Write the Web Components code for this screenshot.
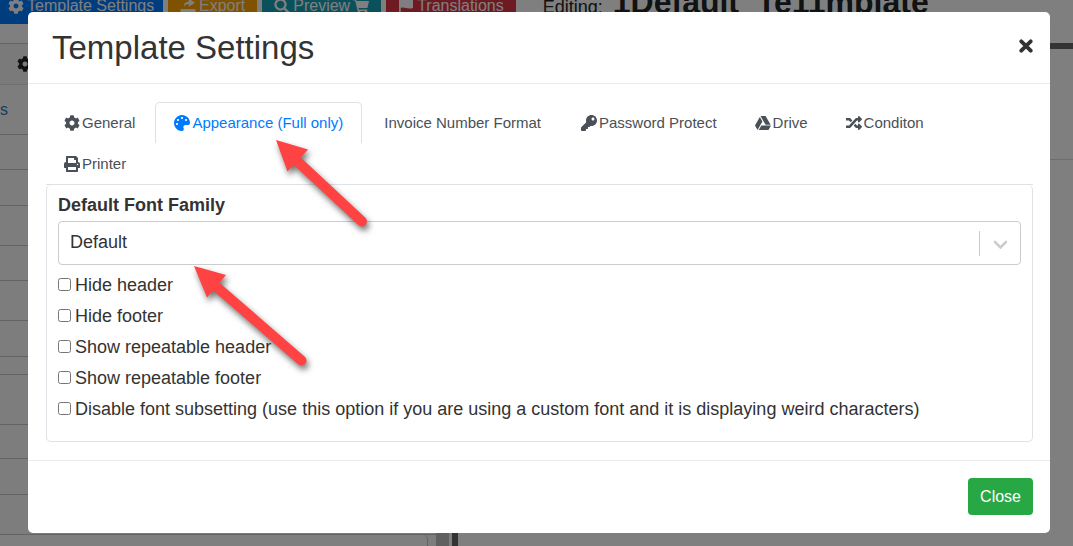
<!DOCTYPE html>
<html lang="en">
<head>
<meta charset="utf-8">
<meta name="viewport" content="width=device-width, initial-scale=1">
<title>Template Settings</title>
<style>
  :root {
    --accent: #007bff;
    --text: #333;
    --muted: #495057;
    --line: #dee2e6;
  }
  html, body { height: 100%; }
  body {
    margin: 0;
    overflow: hidden;
    background: #fff;
    color: var(--text);
    font-family: "Liberation Sans", Arial, sans-serif;
  }
</style>
</head>
<body>

<editor-page inert></editor-page>

<modal-dialog heading="Template Settings">
  <tab-bar>
    <tab-item icon="cog">General</tab-item>
    <tab-item icon="palette" active>Appearance (Full only)</tab-item>
    <tab-item>Invoice Number Format</tab-item>
    <tab-item icon="key">Password Protect</tab-item>
    <tab-item icon="drive">Drive</tab-item>
    <tab-item icon="random">Conditon</tab-item>
    <tab-item icon="print">Printer</tab-item>
  </tab-bar>
  <tab-panel>
    <select-field label="Default Font Family" value="Default"></select-field>
    <check-field label="Hide header"></check-field>
    <check-field label="Hide footer"></check-field>
    <check-field label="Show repeatable header"></check-field>
    <check-field label="Show repeatable footer"></check-field>
    <check-field label="Disable font subsetting (use this option if you are using a custom font and it is displaying weird characters)"></check-field>
  </tab-panel>
</modal-dialog>

<pointer-arrows></pointer-arrows>

<script>
(function () {
  const ICONS = {
    cog: '<path d="M487.4 315.7l-42.6-24.6c4.3-23.2 4.3-47 0-70.2l42.6-24.6c4.9-2.8 7.1-8.6 5.5-14-11.1-35.6-30-67.8-54.7-94.6-3.8-4.1-10-5.1-14.8-2.3L380.8 110c-17.9-15.4-38.5-27.3-60.8-35.1V25.8c0-5.6-3.9-10.5-9.4-11.7-36.7-8.2-74.3-7.8-109.2 0-5.5 1.2-9.4 6.1-9.4 11.7V75c-22.2 7.9-42.8 19.8-60.8 35.1L88.7 85.5c-4.9-2.8-11-1.9-14.8 2.3-24.7 26.7-43.6 58.9-54.7 94.6-1.7 5.4.6 11.2 5.5 14L67.3 221c-4.3 23.2-4.3 47 0 70.2l-42.6 24.6c-4.9 2.8-7.1 8.6-5.5 14 11.1 35.6 30 67.8 54.7 94.6 3.8 4.1 10 5.1 14.8 2.3l42.6-24.6c17.9 15.4 38.5 27.3 60.8 35.1v49.2c0 5.6 3.9 10.5 9.4 11.7 36.7 8.2 74.3 7.8 109.2 0 5.5-1.2 9.4-6.1 9.4-11.7v-49.2c22.2-7.9 42.8-19.8 60.8-35.1l42.6 24.6c4.9 2.8 11 1.9 14.8-2.3 24.7-26.7 43.6-58.9 54.7-94.6 1.5-5.5-.7-11.3-5.6-14.1zM256 336c-44.1 0-80-35.9-80-80s35.9-80 80-80 80 35.9 80 80-35.9 80-80 80z"/>',
    palette: '<path d="M204.3 5C104.9 24.4 24.8 104.3 5.2 203.4c-37 187 131.7 326.4 258.8 306.7 41.2-6.4 61.4-54.6 42.5-91.7-23.1-45.4 9.9-98.4 60.9-98.4h79.7c35.8 0 64.8-29.6 64.9-65.3C511.5 97.1 368.1-26.9 204.3 5zM96 320c-17.7 0-32-14.3-32-32s14.3-32 32-32 32 14.3 32 32-14.3 32-32 32zm32-128c-17.7 0-32-14.3-32-32s14.3-32 32-32 32 14.3 32 32-14.3 32-32 32zm128-64c-17.7 0-32-14.3-32-32s14.3-32 32-32 32 14.3 32 32-14.3 32-32 32zm128 64c-17.7 0-32-14.3-32-32s14.3-32 32-32 32 14.3 32 32-14.3 32-32 32z"/>',
    key: '<path d="M512 176c0 97.2-78.8 176-176 176-11.2 0-22.2-1.1-32.8-3.1l-24 27A24 24 0 0 1 261.2 384H224v40c0 13.3-10.7 24-24 24h-40v40c0 13.3-10.7 24-24 24H24c-13.3 0-24-10.7-24-24v-78.1c0-6.4 2.5-12.5 7-17l161.8-161.8C163.1 213.8 160 195.3 160 176 160 78.8 238.8 0 336 0c97.5 0 176 78.5 176 176zM336 128c0 26.5 21.5 48 48 48s48-21.5 48-48-21.5-48-48-48-48 21.5-48 48z"/>',
    drive: '<path d="M339 314.9L175.4 32h161.2l163.6 282.9H339zm-137.5 23.6L120.9 480h310.5L512 338.5H201.5zM154.1 67.4L0 338.5 80.6 480 237 208.8 154.1 67.4z"/>',
    random: '<path d="M505 359c9.4 9.4 9.4 24.6 0 34l-80 80c-15 15-41 4.500-41-17V416h-58.800a12 12 0 0 1-8.800-3.800l-70.500-75.600 53.300-57.100L352 336h32v-40c0-21.400 25.900-32 41-17l80 80zM12 176h84l52.800 56.600 53.300-57.200-70.500-75.600a12 12 0 0 0-8.800-3.800H12c-6.600 0-12 5.400-12 12v56c0 6.600 5.400 12 12 12zm372 0v40c0 21.500 26 32 41 17l80-80c9.400-9.400 9.400-24.600 0-34l-80-80c-15-15-41-4.400-41 17v40h-58.800a12 12 0 0 0-8.800 3.800L96 336H12c-6.600 0-12 5.400-12 12v56c0 6.600 5.400 12 12 12h110.800c3.300 0 6.500-1.400 8.800-3.800L352 176h32z"/>',
    print: '<path d="M448 192V77.300c0-8.500-3.400-16.600-9.400-22.600L393.400 9.400c-6-6-14.200-9.400-22.700-9.400H96C78.300 0 64 14.300 64 32v160c-35.400 0-64 28.700-64 64v112c0 8.800 7.200 16 16 16h48v96c0 17.700 14.300 32 32 32h320c17.700 0 32-14.300 32-32v-96h48c8.800 0 16-7.200 16-16V256c0-35.300-28.700-64-64-64zm-64 256H128v-96h256v96zm0-224H128V64h192v48c0 8.800 7.200 16 16 16h48v96zm48 72c-13.300 0-24-10.700-24-24s10.700-24 24-24 24 10.700 24 24-10.700 24-24 24z"/>',
    search: '<path fill="none" stroke="currentColor" stroke-width="72" stroke-linecap="round" d="M208 48a160 160 0 1 0 .1 0zM328 328l140 140"/>',
    cart: '<path d="M0 32h96l20 64h396l-50 224H176l10 48h270v48H148L68 80H0z"/><circle cx="196" cy="456" r="52"/><circle cx="416" cy="456" r="52"/>',
    flag: '<path d="M32 0h56v40c110-50 190 50 392 0v280c-180 60-280-50-392 0v192H32z"/>',
    send: '<path d="M16 352h480v144H16zM120 290c0-110 60-170 160-170V20l200 130-200 130v-90c-80 0-120 30-160 100z"/>',
    times: '<path fill="none" stroke="currentColor" stroke-width="140" stroke-linecap="round" d="M84 84l344 344M428 84L84 428"/>'
  };

  function icon(name) {
    return ICONS[name] ? `<svg class="ic" viewBox="0 0 512 512" fill="currentColor" aria-hidden="true">${ICONS[name]}</svg>` : '';
  }

  const BASE = `
    *, *::before, *::after { box-sizing: border-box; }
    .ic { width: 16px; height: 16px; flex: none; display: block; }
  `;

  /* small helper: open shadow root from a string */
  function mount(host, html) {
    if (!host.shadowRoot) host.attachShadow({ mode: 'open' });
    host.shadowRoot.innerHTML = `<style>${BASE}</style>${html}`;
  }

  /* The editor that sits behind the modal. Its top is scrolled out of view. */
  class EditorPage extends HTMLElement {
    connectedCallback() {
      const rows = [50, 35, 36, 40, 35, 40, 36, 18, 50, 34, 36, 40];
      mount(this, `
        <style>
          :host { display: flex; flex-direction: column; height: 100vh; overflow: hidden; color: #212529; }
          .toolbar { display: flex; align-items: center; gap: 5px; height: 37px; margin-top: -13px; flex: none; }
          button {
            display: flex; align-items: center; gap: 3px;
            height: 37px; padding: 0 12px; border: 0;
            font: 16px/24px "Liberation Sans", Arial, sans-serif; color: #fff; white-space: nowrap;
          }
          .first { width: 163px; padding: 0 8px; background: #007bff; }
          .export { background: #ffa500; }
          .preview { background: #17a2b8; }
          .trans { background: #dc3545; }
          h2 { display: flex; align-items: baseline; gap: 10px; margin: 0 0 0 22px; padding-bottom: 2px; font-size: 18px; font-weight: 400; line-height: 37px; white-space: nowrap; }
          h2 b { font-size: 32px; }
          .cols { display: flex; flex: 1; min-height: 0; margin-top: 19px; }
          .side { width: 436px; flex: none; border-top: 1px solid #c8c8c8; background: #fafafa; }
          .head { height: 41px; padding: 12px 17px; border-bottom: 1px solid #e0e0e0; background: #f4f4f4; }
          .row { border-bottom: 1px solid #c4c6c8; }
          .row a { font-size: 16px; line-height: 50px; color: #337ab7; text-decoration: none; }
          .box { height: 60px; width: 428px; border: 1px solid #c4c4c4; border-width: 0 1px 0 0; border-top-right-radius: 5px; background: #fff; }
          .scroll { width: 13px; margin-right: 3px; flex: none; background: #c0c0c0; }
          .main { flex: 1; border: solid #666; border-width: 6px 0 0 6px; background: #fff; }
          .strip { height: 111px; border-bottom: 1px solid #ddd; }
        </style>
        <div class="toolbar">
          <button class="first">${icon('cog')}Template Settings</button>
          <button class="export">${icon('send')}Export</button>
          <button class="preview">${icon('search')}Preview${icon('cart')}</button>
          <button class="trans">${icon('flag')}Translations</button>
          <h2>Editing: <b>1Default_Te11mplate</b></h2>
        </div>
        <div class="cols">
          <div class="side">
            <div class="head">${icon('cog')}</div>
            ${rows.map((h, i) => `<div class="row" style="height:${h}px">${i ? '' : '<a href="#">s</a>'}</div>`).join('')}
            <div class="box"></div>
          </div>
          <div class="scroll"></div>
          <div class="main"><div class="strip"></div></div>
        </div>
      `);
    }
  }

  class ModalDialog extends HTMLElement {
    connectedCallback() {
      mount(this, `
        <style>
          :host { position: fixed; inset: 0; display: block; padding: 12px 23px 13px 28px; background: rgba(0, 0, 0, .5); }
          .dialog { background: #fff; border-radius: 5px; }
          header { display: flex; align-items: center; justify-content: space-between; height: 72px; padding: 0 17px 0 24px; border-bottom: 1px solid #e9ecef; }
          h1 { margin: 0; font-size: 33px; font-weight: 400; line-height: 40px; }
          header button { padding: 0 0 4px; border: 0; background: none; color: #333; }
          header .ic { width: 14px; height: 14px; }
          main { padding: 18px 17px 18px 18px; }
          footer { display: flex; justify-content: flex-end; padding: 17px 17px 18px; border-top: 1px solid #e9ecef; }
          footer button {
            padding: 7px 12px; border: 0; border-radius: 4px;
            background: #28a745; color: #fff;
            font: 16px/23px "Liberation Sans", Arial, sans-serif;
          }
        </style>
        <section class="dialog" role="dialog" aria-modal="true" aria-labelledby="t">
          <header>
            <h1 id="t">${this.getAttribute('heading')}</h1>
            <button type="button" aria-label="Dismiss">${icon('times')}</button>
          </header>
          <main><slot></slot></main>
          <footer><button type="button">Close</button></footer>
        </section>
      `);
    }
  }

  class TabBar extends HTMLElement {
    connectedCallback() {
      this.setAttribute('role', 'tablist');
      mount(this, `
        <style>
          :host { display: flex; flex-wrap: wrap; column-gap: 2px; border-bottom: 1px solid var(--line); }
        </style>
        <slot></slot>
      `);
    }
  }

  class TabItem extends HTMLElement {
    connectedCallback() {
      mount(this, `
        <style>
          :host { display: block; }
          button {
            display: flex; align-items: center; gap: 2px;
            height: 41px; padding: 0 17px;
            border: 1px solid transparent; border-bottom: 0; border-radius: 5px 5px 0 0;
            background: none; color: var(--muted);
            font: 15px/24px "Liberation Sans", Arial, sans-serif; white-space: nowrap;
          }
          :host([active]) button { padding: 0 18px; border-color: var(--line); color: var(--accent); background: #fff; }
          :host(:not([icon])) button { padding: 0 19px; }
        </style>
        <button type="button" role="tab" aria-selected="${this.hasAttribute('active')}">${icon(this.getAttribute('icon'))}<slot></slot></button>
      `);
    }
  }

  class TabPanel extends HTMLElement {
    connectedCallback() {
      mount(this, `
        <style>
          :host { display: flex; flex-direction: column; padding: 8px 11px 17px; border: 1px solid var(--line); border-top: 0; border-radius: 5px; }
        </style>
        <slot></slot>
      `);
    }
  }

  class SelectField extends HTMLElement {
    connectedCallback() {
      mount(this, `
        <style>
          :host { display: block; margin-bottom: 4px; }
          label { display: block; font-size: 18px; font-weight: 700; line-height: 24px; margin-bottom: 4px; }
          .wrap { position: relative; }
          select {
            display: block; width: 100%; height: 44px; padding: 0 52px 3px 11px;
            border: 1px solid #ccc; border-radius: 4px; background: #fff; color: #333;
            font: 18px/24px "Liberation Sans", Arial, sans-serif;
            -webkit-appearance: none; appearance: none;
          }
          /* divider and chevron lie over the select */
          .mark {
            position: absolute; top: 10px; bottom: 9px; right: 0; width: 42px;
            display: flex; align-items: center; justify-content: center;
            border-left: 1px solid #ccc; color: #ccc; pointer-events: none;
          }
        </style>
        <label for="s">${this.getAttribute('label')}</label>
        <div class="wrap">
          <select id="s"><option>${this.getAttribute('value')}</option></select>
          <span class="mark"><svg width="20" height="20" viewBox="0 0 20 20" aria-hidden="true"><path d="M4 8l5.500 5.500L15 8" fill="none" stroke="currentColor" stroke-width="2.600" stroke-linecap="round"/></svg></span>
        </div>
      `);
    }
  }

  class CheckField extends HTMLElement {
    connectedCallback() {
      mount(this, `
        <style>
          :host { display: flex; align-items: center; gap: 4px; height: 31px; }
          input { width: 13px; height: 13px; margin: 0; flex: none; }
          label { font-size: 18px; line-height: 24px; white-space: nowrap; }
        </style>
        <input type="checkbox" id="c"><label for="c">${this.getAttribute('label')}</label>
      `);
    }
  }

  /* Two red callout arrows drawn over the dialog */
  class PointerArrows extends HTMLElement {
    connectedCallback() {
      mount(this, `
        <style>
          :host { position: fixed; top: 0; left: 0; pointer-events: none; }
          svg { display: block; overflow: visible; filter: drop-shadow(2px 4px 3px rgba(0, 0, 0, .55)); }
        </style>
        <svg width="400" height="400" viewBox="0 0 400 400" fill="#ff4242" stroke="#ff4242" aria-hidden="true">
          <path d="M276 140L308 149.500L287.500 171.500Z" stroke="none"/>
          <path d="M296 160L362 221.500" stroke-width="10" stroke-linecap="round"/>
          <path d="M194 266L226 275L207 297.500Z" stroke="none"/>
          <path d="M215 285.500L301.500 360.500" stroke-width="10" stroke-linecap="round"/>
        </svg>
      `);
    }
  }

  customElements.define('editor-page', EditorPage);
  customElements.define('modal-dialog', ModalDialog);
  customElements.define('tab-bar', TabBar);
  customElements.define('tab-item', TabItem);
  customElements.define('tab-panel', TabPanel);
  customElements.define('select-field', SelectField);
  customElements.define('check-field', CheckField);
  customElements.define('pointer-arrows', PointerArrows);
})();
</script>
</body>
</html>
